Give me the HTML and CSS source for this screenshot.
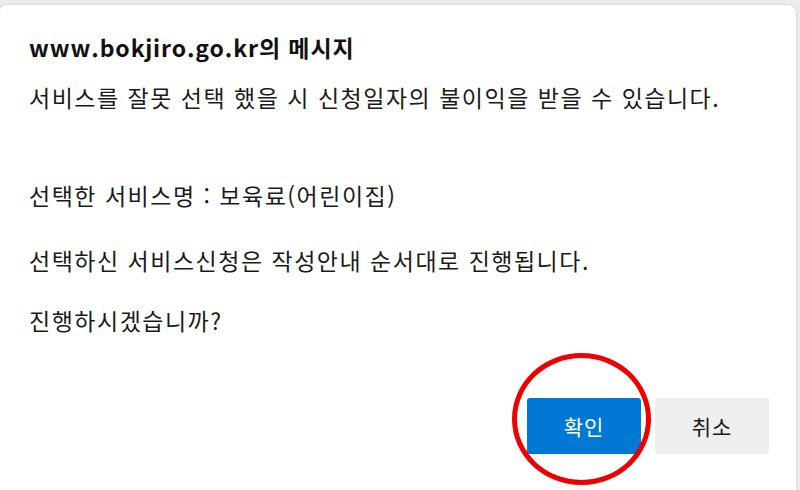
FILE: index.html
```html
<!DOCTYPE html>
<html lang="ko">
<head>
<meta charset="utf-8">
<link rel="stylesheet" href="styles.css">
</head>
<body>
<div class="dialog">
  <h1 class="title">www.bokjiro.go.kr의 메시지</h1>
  <div class="msg">
    <p class="line l1">서비스를 잘못 선택 했을 시 신청일자의 불이익을 받을 수 있습니다.</p>
    <p class="line l2">선택한 서비스명 : 보육료(어린이집)</p>
    <p class="line l3">선택하신 서비스신청은 작성안내 순서대로 진행됩니다.</p>
    <p class="line l4">진행하시겠습니까?</p>
  </div>
  <div class="actions">
    <div class="btn-wrap">
      <button class="btn primary">확인</button>
      <span class="ring"></span>
    </div>
    <button class="btn secondary">취소</button>
  </div>
</div>
</body>
</html>
```
FILE: styles.css
```css
html, body {
  margin: 0;
  padding: 0;
  width: 800px;
  height: 490px;
  overflow: hidden;
  background: #ececec;
}
body {
  font-family: "Noto Sans CJK KR", "Noto Sans", sans-serif;
  color: #1a1a1a;
}
.dialog {
  margin-top: 5px;
  margin-left: -1px;
  width: 797px;
  height: 540px;
  background: #ffffff;
  border-radius: 8px;
  box-shadow: 0 0 3px rgba(0,0,0,0.18);
  box-sizing: border-box;
  padding: 28px 0 0 30px;
  position: relative;
}
.title {
  margin: 0;
  font-size: 23px;
  font-weight: 700;
  letter-spacing: 0.9px;
  line-height: 28px;
  color: #111;
}
.msg {
  margin-top: 21px;
}
.line {
  margin: 0;
  font-size: 23px;
  letter-spacing: 1.5px;
  line-height: 30px;
  color: #1a1a1a;
}
.l2 { margin-top: 68px; }
.l3 { margin-top: 35px; }
.l4 { margin-top: 30px; }
.actions {
  display: flex;
  gap: 14px;
  margin-top: 63px;
  margin-left: 498px;
}
.btn-wrap {
  position: relative;
}
.btn {
  width: 114px;
  height: 56px;
  border: none;
  border-radius: 3px;
  font-family: "Noto Sans CJK KR", "Noto Sans", sans-serif;
  font-size: 21px;
  letter-spacing: 1px;
  padding: 0;
}
.primary {
  background: #0078d4;
  color: #ffffff;
}
.secondary {
  background: #efefef;
  color: #1a1a1a;
}
.ring {
  position: absolute;
  left: -15px;
  top: -45px;
  width: 129px;
  height: 122px;
  border: 5px solid #ee0000;
  border-radius: 50%;
  pointer-events: none;
}
```
